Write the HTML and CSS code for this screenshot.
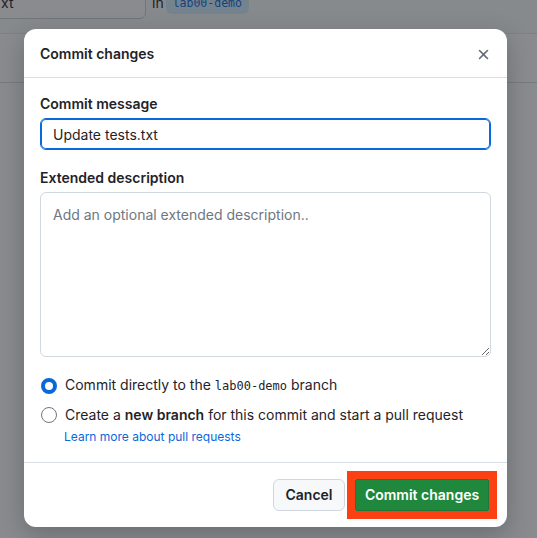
FILE: index.html
```html
<!DOCTYPE html>
<html lang="en">
<head>
<meta charset="utf-8">
<title>Commit changes</title>
<link rel="stylesheet" href="styles.css">
</head>
<body>
<div class="page">
  <div class="topbar">
    <div class="filename">xt</div>
    <span class="in">in</span>
    <span class="branch-chip">lab00-demo</span>
  </div>
  <div class="subbar"></div>
  <div class="content"></div>
</div>
<div class="backdrop"></div>

<div class="dialog" role="dialog" aria-labelledby="dlg-title">
  <div class="dialog-header">
    <h1 id="dlg-title" class="dialog-title">Commit changes</h1>
    <button class="close-btn" aria-label="Close">
      <svg viewBox="0 0 16 16" width="16" height="16" aria-hidden="true"><path fill="currentColor" d="M3.72 3.72a.75.75 0 0 1 1.06 0L8 6.94l3.22-3.22a.749.749 0 0 1 1.275.326.749.749 0 0 1-.215.734L9.06 8l3.22 3.22a.749.749 0 0 1-.326 1.275.749.749 0 0 1-.734-.215L8 9.06l-3.22 3.22a.751.751 0 0 1-1.042-.018.751.751 0 0 1-.018-1.042L6.94 8 3.72 4.78a.75.75 0 0 1 0-1.06Z"/></svg>
    </button>
  </div>
  <div class="dialog-body">
    <label class="field-label" for="msg">Commit message</label>
    <input id="msg" class="text-input focused" type="text" value="Update tests.txt">
    <label class="field-label second" for="desc">Extended description</label>
    <textarea id="desc" class="text-area" placeholder="Add an optional extended description.."></textarea>

    <div class="radio-row first">
      <span class="radio checked"></span>
      <span class="radio-label">Commit directly to the <code class="mono">lab00-demo</code> branch</span>
    </div>
    <div class="radio-row">
      <span class="radio"></span>
      <span class="radio-label">Create a <strong>new branch</strong> for this commit and start a pull request</span>
    </div>
    <a class="learn-link" href="#">Learn more about pull requests</a>
  </div>
  <div class="dialog-footer">
    <button class="btn btn-default">Cancel</button>
    <span class="highlight">
      <button class="btn btn-primary">Commit changes</button>
    </span>
  </div>
</div>
</body>
</html>
```

FILE: styles.css
```css
* { box-sizing: border-box; }

html, body {
  margin: 0;
  padding: 0;
  width: 537px;
  height: 538px;
  overflow: hidden;
}

body {
  font-family: Inter, "Liberation Sans", sans-serif;
  color: #1f2328;
  background: #ffffff;
  position: relative;
}

/* background page */
.page {
  display: flex;
  flex-direction: column;
}

.topbar {
  display: flex;
  align-items: center;
  margin-top: -14px;
  height: 48px;
  padding-bottom: 14px;
  border-bottom: 1px solid #e6e9ec;
  background: #fbfcfd;
}

.filename {
  width: 166px;
  height: 32px;
  margin-left: -20px;
  padding-left: 20px;
  border: 1px solid #cdd3d9;
  border-radius: 6px;
  background: #ffffff;
  font-size: 14px;
  line-height: 30px;
  color: #1f2328;
  flex: none;
}

.in {
  font-size: 14px;
  color: #1f2328;
  margin-left: 6px;
}

.branch-chip {
  font-family: "DejaVu Sans Mono", "Liberation Mono", monospace;
  font-size: 11.5px;
  line-height: 22px;
  padding: 0 7px;
  margin-left: 2px;
  margin-top: 0;
  border-radius: 6px;
  background: #d6efff;
  color: #0969da;
}

.subbar {
  height: 49px;
  border-bottom: 1px solid #d8dee4;
  background: #ffffff;
}

.content {
  flex: 1;
}

.backdrop {
  position: absolute;
  inset: 0;
  background: rgba(29, 33, 38, 0.52);
}

/* dialog */
.dialog {
  position: absolute;
  left: 24px;
  top: 29px;
  width: 483px;
  height: 498px;
  background: #ffffff;
  border-radius: 12px;
  box-shadow: 0 8px 24px rgba(20, 23, 27, 0.25);
  display: flex;
  flex-direction: column;
  overflow: hidden;
}

.dialog-header {
  height: 49px;
  display: flex;
  align-items: center;
  justify-content: space-between;
  padding: 0 8px 0 16px;
  border-bottom: 1px solid #d8dee4;
  flex: none;
}

.dialog-title {
  margin: 0;
  font-size: 14px;
  font-weight: 600;
  line-height: 20px;
  margin-top: 1px;
}

.close-btn {
  width: 32px;
  height: 32px;
  display: flex;
  align-items: center;
  justify-content: center;
  border: 0;
  background: transparent;
  color: #656d76;
  padding: 0;
  margin-top: 2px;
}

.close-btn svg { width: 17px; height: 17px; }

.dialog-body {
  padding: 16px 16px 16px 16px;
  display: flex;
  flex-direction: column;
  border-bottom: 1px solid #d8dee4;
  flex: none;
}

.field-label {
  font-size: 14px;
  font-weight: 600;
  line-height: 20px;
  margin-bottom: 4px;
}

.field-label.second { margin-top: 18px; }

.text-input {
  height: 32px;
  width: 100%;
  font-family: inherit;
  font-size: 14px;
  color: #1f2328;
  padding: 0 12px;
  border: 1px solid #d0d7de;
  border-radius: 6px;
  background: #ffffff;
  outline: none;
}

.text-input.focused {
  border-color: #0969da;
  box-shadow: inset 0 0 0 1px #0969da;
}

.text-area {
  height: 165px;
  width: 100%;
  font-family: inherit;
  font-size: 14px;
  line-height: 20px;
  padding: 12px 12px;
  border: 1px solid #d0d7de;
  border-radius: 6px;
  resize: vertical;
  background: #ffffff;
  color: #1f2328;
  display: block;
}

.text-area::placeholder { color: #6e7781; }

.radio-row {
  display: flex;
  align-items: center;
  gap: 8px;
  margin-top: 9px;
  font-size: 14px;
  line-height: 20px;
}

.radio-row.first { margin-top: 18px; }

.radio {
  width: 16px;
  height: 16px;
  border-radius: 50%;
  border: 1px solid #6e7781;
  background: #ffffff;
  flex: none;
  margin-left: 1px;
}

.radio.checked {
  border: 4px solid #0969da;
}

.radio-label strong { font-weight: 600; }

.mono {
  font-family: "DejaVu Sans Mono", "Liberation Mono", monospace;
  font-size: 12px;
}

.learn-link {
  margin-left: 24px;
  margin-top: 3px;
  font-size: 12px;
  line-height: 18px;
  color: #0969da;
  text-decoration: none;
  align-self: flex-start;
}

.dialog-footer {
  flex: 1;
  display: flex;
  align-items: center;
  justify-content: flex-end;
  gap: 2px;
  padding: 0 10px 0 16px;
}

.btn {
  height: 32px;
  padding: 0;
  font-family: inherit;
  font-size: 14px;
  font-weight: 600;
  line-height: 20px;
  border-radius: 6px;
  border: 1px solid #d0d7de;
  text-align: center;
}

.btn-default {
  width: 72px;
  background: #f6f8fa;
  color: #1f2328;
}

.highlight {
  display: flex;
  border: 8px solid #fb4114;
}

.btn-primary {
  width: 134px;
  background: #1f883d;
  color: #ffffff;
  border-color: rgba(31, 35, 40, 0.15);
  border-radius: 1px;
}
```
